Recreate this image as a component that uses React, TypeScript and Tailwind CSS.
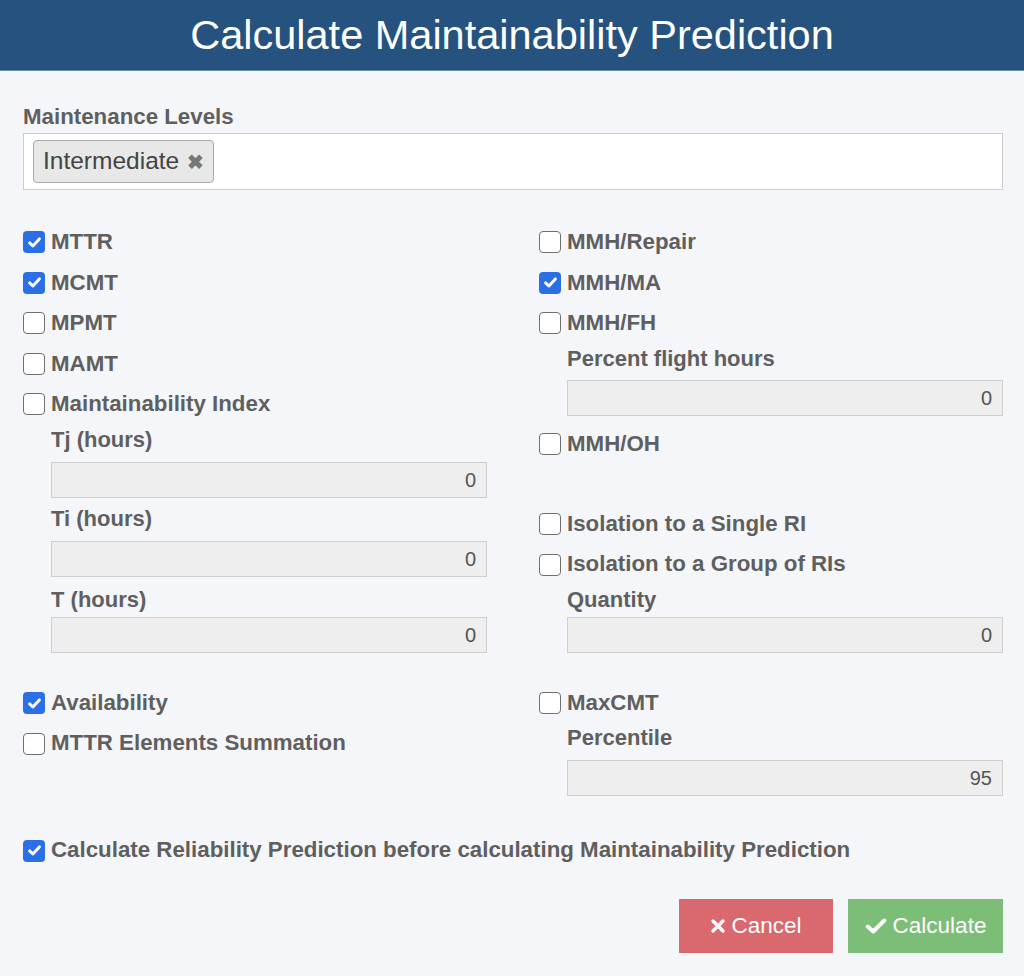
import React from "react";

const font = { fontFamily: '"Liberation Sans", Arial, sans-serif' };

function Box({ checked }: { checked?: boolean }) {
  if (checked) {
    return (
      <span className="flex h-[22px] w-[22px] shrink-0 items-center justify-center rounded-[4px] bg-[#2a6fe6]">
        <svg viewBox="0 0 16 16" className="h-[17px] w-[17px]">
          <path d="M3.4 8.4 L6.5 11.3 L12.6 4.6" fill="none" stroke="#fff" strokeWidth="2.8" strokeLinecap="round" strokeLinejoin="round" />
        </svg>
      </span>
    );
  }
  return <span className="h-[22px] w-[22px] shrink-0 rounded-[4px] border-[1.5px] border-[#6f6f6f] bg-white" />;
}

function Check({ label, checked, className = "" }: { label: string; checked?: boolean; className?: string }) {
  return (
    <div className={`flex h-[40.5px] items-center gap-[6px] ${className}`}>
      <Box checked={checked} />
      <span className="text-[22.3px] font-bold leading-none text-[#5f5f5f]">{label}</span>
    </div>
  );
}

function Label({ text, className = "" }: { text: string; className?: string }) {
  return (
    <div className={`ml-[28px] flex h-[30px] items-center text-[22px] font-bold leading-none text-[#5f5f5f] ${className}`}>
      {text}
    </div>
  );
}

function Field({ value, className = "" }: { value: string; className?: string }) {
  return (
    <div
      className={`ml-[28px] flex h-[36px] items-center justify-end border-[1.5px] border-[#cfcfcf] bg-[#eeeeee] pr-[10px] text-[20px] text-[#555] ${className}`}
    >
      {value}
    </div>
  );
}

export default function App() {
  return (
    <div className="min-h-[976px] w-[1024px] bg-[#f4f6fa]" style={font}>
      <div className="flex h-[71px] items-center justify-center border-b border-[#6b8fb3] bg-[#25527e]">
        <h1 className="text-[41.5px] leading-none font-normal text-white">Calculate Maintainability Prediction</h1>
      </div>

      <div className="pl-[23px] pr-[21px]">
        <div className="mt-[33px] flex h-[26px] items-center text-[22.3px] font-bold leading-none text-[#5f5f5f]">
          Maintenance Levels
        </div>
        <div className="mt-[3px] flex h-[57px] items-center border-[1.5px] border-[#cccccc] bg-white pl-[9px]">
          <div className="flex h-[43px] items-center gap-[8px] rounded-[4px] border border-[#aaaaaa] bg-[#e8e8e8] pl-[9px] pr-[9px] text-[24.5px] text-[#444]">
            <span>Intermediate</span>
            <span className="text-[20px] font-bold text-[#777]">✖</span>
          </div>
        </div>

        <div className="mt-[32px] grid grid-cols-2 gap-x-[52px]">
          {/* left column */}
          <div className="flex flex-col">
            <Check label="MTTR" checked />
            <Check label="MCMT" checked />
            <Check label="MPMT" />
            <Check label="MAMT" />
            <Check label="Maintainability Index" />
            <Label text="Tj (hours)" />
            <Field value="0" className="mt-[7px]" />
            <Label text="Ti (hours)" className="mt-[6px]" />
            <Field value="0" className="mt-[7px]" />
            <Label text="T (hours)" className="mt-[8px]" />
            <Field value="0" className="mt-[2px]" />
          </div>
          {/* right column */}
          <div className="flex flex-col">
            <Check label="MMH/Repair" />
            <Check label="MMH/MA" checked />
            <Check label="MMH/FH" />
            <Label text="Percent flight hours" className="mt-[0.5px]" />
            <Field value="0" className="mt-[6px]" />
            <Check label="MMH/OH" className="mt-[7.75px]" />
            <div className="h-[39.5px]" />
            <Check label="Isolation to a Single RI" />
            <Check label="Isolation to a Group of RIs" />
            <Label text="Quantity" />
            <Field value="0" className="mt-[2px]" />
          </div>
        </div>

        <div className="mt-[30px] grid grid-cols-2 gap-x-[52px]">
          <div className="flex flex-col">
            <Check label="Availability" checked />
            <Check label="MTTR Elements Summation" />
          </div>
          <div className="flex flex-col">
            <Check label="MaxCMT" />
            <Label text="Percentile" />
            <Field value="95" className="mt-[7px]" />
          </div>
        </div>

        <div className="mt-[34px]">
          <Check label="Calculate Reliability Prediction before calculating Maintainability Prediction" checked />
        </div>

        <div className="mt-[28px] flex justify-end gap-[15px]">
          <button className="flex h-[54px] w-[154px] items-center justify-center gap-[5px] bg-[#d9686f] text-[22.5px] text-white">
            <svg viewBox="0 0 16 16" className="h-[16px] w-[16px]">
              <path d="M3 3 L13 13 M13 3 L3 13" stroke="#fff" strokeWidth="3.4" strokeLinecap="round" />
            </svg>
            <span>Cancel</span>
          </button>
          <button className="flex h-[54px] w-[155px] items-center justify-center gap-[6px] bg-[#7cbe78] text-[22.5px] text-white">
            <svg viewBox="0 0 20 16" className="h-[18px] w-[22px]">
              <path d="M2.5 8.5 L7.5 13 L17.5 3" fill="none" stroke="#fff" strokeWidth="3.6" strokeLinecap="round" strokeLinejoin="round" />
            </svg>
            <span>Calculate</span>
          </button>
        </div>
      </div>
    </div>
  );
}
